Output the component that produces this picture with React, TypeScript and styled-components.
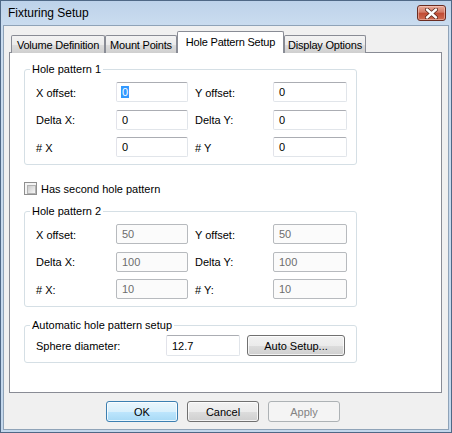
import React from 'react'
import styled, { createGlobalStyle, css } from 'styled-components'

const GlobalStyle = createGlobalStyle`
  html, body {
    margin: 0;
    padding: 0;
    background: #ffffff;
  }
  body {
    font-family: "Liberation Sans", Arial, sans-serif;
    font-size: 11px;
    color: #000;
  }
  * {
    box-sizing: border-box;
  }
`

const Window = styled.div`
  width: 452px;
  height: 433px;
  border: 1px solid #4f6886;
  background: linear-gradient(#bdd2ea, #cadcef 24px, #c3d7ec);
  padding: 0 2px 2px;
  display: flex;
  flex-direction: column;
`

const TitleBar = styled.div`
  height: 24px;
  flex: none;
  display: flex;
  align-items: center;
  justify-content: space-between;
  padding: 0 3px 0 5px;
`

const Title = styled.div`
  font-size: 12px;
  color: #000;
`

const CloseButton = styled.div`
  width: 29px;
  height: 16px;
  border: 1px solid #6a2c22;
  border-radius: 3px;
  background: linear-gradient(#e8a999, #d37a66 45%, #c04a33 50%, #cf6c52);
  box-shadow: inset 0 0 0 1px rgba(255, 220, 210, 0.45);
  display: flex;
  align-items: center;
  justify-content: center;
`

const Body = styled.div`
  flex: 1;
  background: #f0f0f0;
  border: 1px solid #8fa3b8;
  display: flex;
  flex-direction: column;
`

const TabStrip = styled.div`
  display: flex;
  align-items: flex-end;
  height: 22px;
  margin: 5px 0 -1px 7px;
  position: relative;
  z-index: 1;
`

const Tab = styled.div<{ $w: number; $active?: boolean }>`
  width: ${p => p.$w}px;
  height: 18px;
  border: 1px solid #898c95;
  border-bottom: none;
  border-radius: 2px 2px 0 0;
  background: linear-gradient(#f3f3f3, #ebebeb 50%, #dddddd 51%, #cfcfcf);
  display: flex;
  align-items: center;
  justify-content: center;
  padding-top: 1px;
  white-space: nowrap;
  letter-spacing: -0.2px;
  ${p => p.$active && css`
    height: 22px;
    background: #ffffff;
    padding-top: 0;
    padding-bottom: 2px;
  `}
`

const Panel = styled.div`
  width: 433px;
  height: 341px;
  margin-left: 5px;
  background: #ffffff;
  border: 1px solid #898c95;
  padding: 10px 0 0 14px;
  display: flex;
  flex-direction: column;
`

const GroupBox = styled.fieldset<{ $gap?: number }>`
  width: 333px;
  margin: ${p => p.$gap ?? 0}px 0 0;
  padding: 0;
  border: 1px solid #d5dfe5;
  border-radius: 3px;
  min-width: 0;
`

const Legend = styled.legend`
  margin-left: 5px;
  padding: 0 2px;
  line-height: 13px;
  color: #000;
`

const FieldGrid = styled.div`
  display: grid;
  grid-template-columns: 80px 79px 78px 74px;
  grid-auto-rows: 20px;
  row-gap: 7.5px;
  align-items: center;
  padding: 6px 0 7px 11px;
`

const FieldLabel = styled.span`
  padding-top: 1px;
`

const TextBox = styled.div<{ $disabled?: boolean; $w?: number; $h?: number }>`
  width: ${p => p.$w ?? 72}px;
  height: ${p => p.$h ?? 20}px;
  border: 1px solid #e1e5ea;
  border-top-color: #abadb3;
  border-left-color: #e2e3ea;
  border-radius: 2px;
  background: #ffffff;
  padding: 0 0 0 5px;
  display: flex;
  align-items: center;
  color: #000;
  ${p => p.$disabled && css`
    border: 1px solid #b7babe;
    background: #fbfbfb;
    color: #6d6d6d;
  `}
`

const Selected = styled.span`
  background: #3399ff;
  color: #ffffff;
  padding: 0 1px;
  margin-left: -1px;
  line-height: 12px;
`

const CheckRow = styled.label`
  display: flex;
  align-items: center;
  gap: 4px;
  margin: 17px 0 0 0;
  height: 13px;
`

const CheckBox = styled.span`
  width: 13px;
  height: 13px;
  border: 1px solid #8f8f8f;
  background: #f4f4f4;
  padding: 2px;
  display: block;

  &::after {
    content: '';
    display: block;
    width: 100%;
    height: 100%;
    border: 1px solid #b2b2b2;
    background: linear-gradient(135deg, #cbcbcb, #f6f6f6);
  }
`

const AutoRow = styled.div`
  display: flex;
  align-items: center;
  gap: 7px;
  padding: 3px 0 6px 11px;
`

const AutoLabel = styled.span`
  width: 123px;
`

const PushButton = styled.div<{ $kind?: 'default' | 'disabled'; $w?: number }>`
  width: ${p => p.$w ?? 72}px;
  height: 21px;
  border: 1px solid #707070;
  border-radius: 3px;
  background: linear-gradient(#f2f2f2, #ebebeb 50%, #dddddd 51%, #cfcfcf);
  box-shadow: inset 0 0 0 1px rgba(255, 255, 255, 0.75);
  display: flex;
  align-items: center;
  justify-content: center;
  color: #000;
  ${p => p.$kind === 'default' && css`
    border-color: #3c7fb1;
    background: linear-gradient(#eaf6fd, #d9f0fc 50%, #bee6fd 51%, #a7d9f5);
  `}
  ${p => p.$kind === 'disabled' && css`
    border-color: #adb2b5;
    background: #f4f4f4;
    box-shadow: none;
    color: #838383;
  `}
`

const ButtonRow = styled.div`
  display: flex;
  gap: 9px;
  margin: 8px 0 0 102px;
`

type Field = { label: string; value: string; selected?: boolean }

const FieldGroup: React.FC<{ title: string; rows: [Field, Field][]; disabled?: boolean; gap?: number }> = ({ title, rows, disabled, gap }) => (
  <GroupBox $gap={gap}>
    <Legend>{title}</Legend>
    <FieldGrid>
      {rows.map((row, i) => (
        <React.Fragment key={i}>
          {row.map((f, j) => (
            <React.Fragment key={j}>
              <FieldLabel>{f.label}</FieldLabel>
              <TextBox $disabled={disabled} $w={j === 0 ? 72 : 74}>
                {f.selected ? <Selected>{f.value}</Selected> : f.value}
              </TextBox>
            </React.Fragment>
          ))}
        </React.Fragment>
      ))}
    </FieldGrid>
  </GroupBox>
)

const pattern1: [Field, Field][] = [
  [{ label: 'X offset:', value: '0', selected: true }, { label: 'Y offset:', value: '0' }],
  [{ label: 'Delta X:', value: '0' }, { label: 'Delta Y:', value: '0' }],
  [{ label: '# X', value: '0' }, { label: '# Y', value: '0' }],
]

const pattern2: [Field, Field][] = [
  [{ label: 'X offset:', value: '50' }, { label: 'Y offset:', value: '50' }],
  [{ label: 'Delta X:', value: '100' }, { label: 'Delta Y:', value: '100' }],
  [{ label: '# X:', value: '10' }, { label: '# Y:', value: '10' }],
]

const tabs = [
  { name: 'Volume Definition', w: 94 },
  { name: 'Mount Points', w: 72 },
  { name: 'Hole Pattern Setup', w: 107, active: true },
  { name: 'Display Options', w: 82 },
]

export default function App() {
  return (
    <>
      <GlobalStyle />
      <Window>
        <TitleBar>
          <Title>Fixturing Setup</Title>
          <CloseButton>
            <svg width="13" height="11" viewBox="0 0 13 11">
              <path d="M2 1.5 L11 9.5 M11 1.5 L2 9.5" stroke="#5a2418" strokeWidth="4" strokeLinecap="round" />
              <path d="M2 1.5 L11 9.5 M11 1.5 L2 9.5" stroke="#ffffff" strokeWidth="2.4" strokeLinecap="round" />
            </svg>
          </CloseButton>
        </TitleBar>
        <Body>
          <TabStrip>
            {tabs.map(t => (
              <Tab key={t.name} $w={t.w} $active={t.active}>{t.name}</Tab>
            ))}
          </TabStrip>
          <Panel>
            <FieldGroup title="Hole pattern 1" rows={pattern1} />
            <CheckRow>
              <CheckBox />
              Has second hole pattern
            </CheckRow>
            <FieldGroup title="Hole pattern 2" rows={pattern2} disabled gap={10} />
            <GroupBox $gap={12}>
              <Legend>Automatic hole pattern setup</Legend>
              <AutoRow>
                <AutoLabel>Sphere diameter:</AutoLabel>
                <TextBox $w={74} $h={21}>12.7</TextBox>
                <PushButton $w={98}>Auto Setup...</PushButton>
              </AutoRow>
            </GroupBox>
          </Panel>
          <ButtonRow>
            <PushButton $kind="default">OK</PushButton>
            <PushButton>Cancel</PushButton>
            <PushButton $kind="disabled">Apply</PushButton>
          </ButtonRow>
        </Body>
      </Window>
    </>
  )
}
